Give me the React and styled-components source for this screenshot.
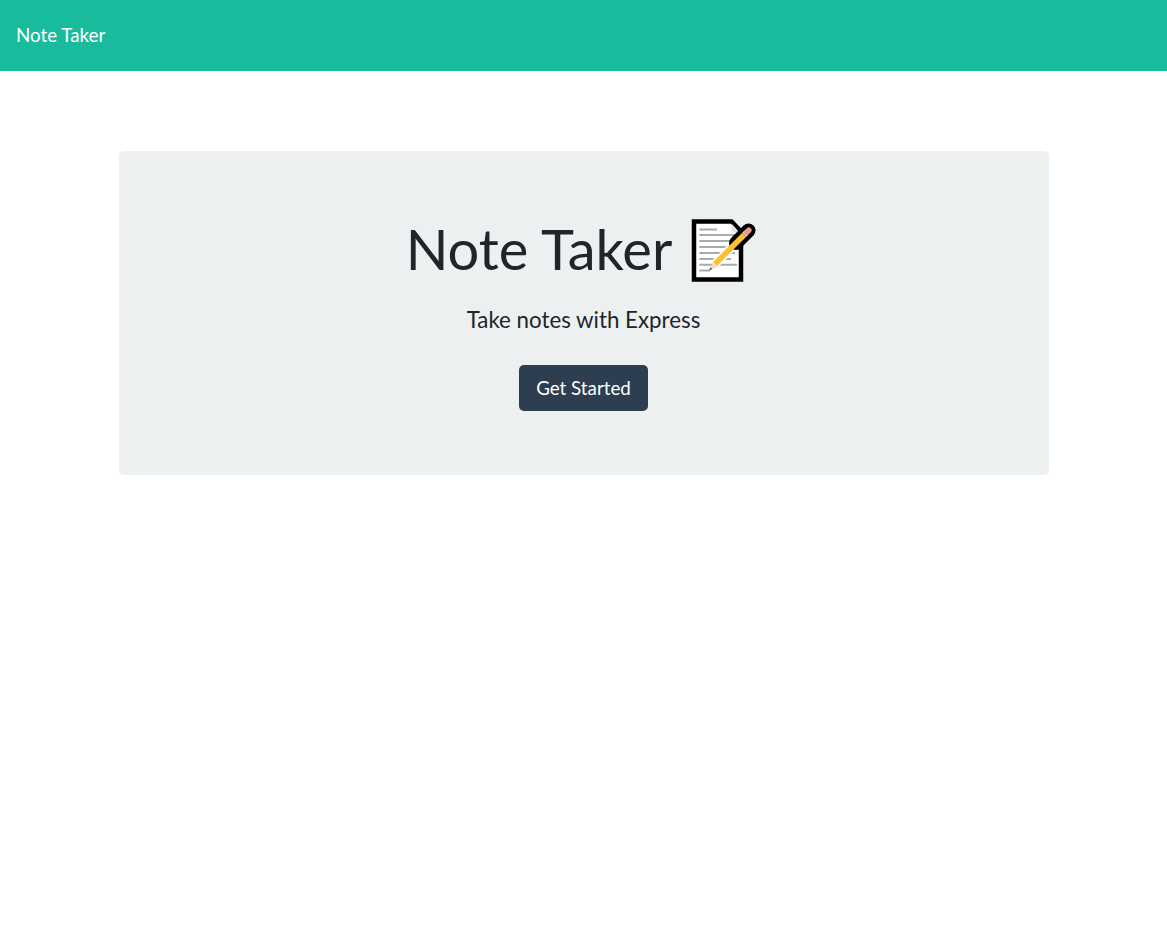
import React from 'react';
import styled, { createGlobalStyle } from 'styled-components';

const GlobalStyle = createGlobalStyle`
  body {
    margin: 0;
    background: #fff;
    font-family: Lato, "Liberation Sans", sans-serif;
    color: #212529;
  }
`;

const NavBar = styled.nav`
  display: flex;
  align-items: center;
  height: 71px;
  padding: 0 16px;
  box-sizing: border-box;
  background-color: #18bc9c;
`;

const Brand = styled.a`
  color: #fff;
  font-size: 18.75px;
  line-height: 1.5;
  text-decoration: none;
`;

const Container = styled.main`
  width: 930px;
  margin: 80px auto 0;
`;

const Jumbotron = styled.section`
  display: flex;
  flex-direction: column;
  align-items: center;
  height: 324px;
  padding: 63px 32px 0;
  box-sizing: border-box;
  border-radius: 5px;
  background-color: #ecf0f1;
`;

const Title = styled.h1`
  display: flex;
  align-items: center;
  gap: 18px;
  margin: 0 0 19px;
  font-size: 56px;
  font-weight: 400;
  line-height: 70px;
`;

const Lead = styled.p`
  margin: 0 0 20px;
  font-size: 22.3px;
  line-height: 34px;
  color: #212529;
`;

const Button = styled.a`
  margin-top: 8px;
  padding: 8px 17px;
  border-radius: 5px;
  background-color: #2c3e50;
  color: #fff;
  font-size: 18.75px;
  line-height: 30px;
  text-decoration: none;
`;

const MemoIcon = () => (
  <svg width="71" height="66" viewBox="0 -2 71 66" aria-hidden="true">
    <path d="M4 3.500h37.500L51 13.500V61.500H4z" fill="#fff" stroke="#000" strokeWidth="4.500" strokeLinejoin="miter" />
    <path d="M41.500 5.500v9h8z" fill="#e4e4e4" />
    <g stroke="#aaa" strokeWidth="2">
      <path d="M9.300 11.500H27" />
      <path d="M9.300 17H45" />
      <path d="M9.300 23H45" />
      <path d="M9.300 29H45" />
      <path d="M9.300 35H45" />
      <path d="M9.300 41H41" />
      <path d="M9.300 46.700H47" />
      <path d="M9.300 52.500H20" />
    </g>
    <path d="M24 47 56 15" stroke="#fff" strokeWidth="9" />
    <path d="M46 25 58.500 12.500" stroke="#000" strokeWidth="14" strokeLinecap="round" />
    <path d="M25 46 54 17" stroke="#fcc02e" strokeWidth="5.600" />
    <path d="M54 17 56.500 14.500" stroke="#e6e6e6" strokeWidth="5.600" />
    <path d="M56.200 14.800 58.800 12.200" stroke="#ef9a8a" strokeWidth="5.600" strokeLinecap="round" />
    <path d="M19 52.500 23 44 28 48.500z" fill="#f5dcc0" />
    <path d="M19 52.500 20.500 49.300 22.400 51z" fill="#555" />
  </svg>
);

export default function App() {
  return (
    <>
      <GlobalStyle />
      <NavBar>
        <Brand href="#">Note Taker</Brand>
      </NavBar>
      <Container>
        <Jumbotron>
          <Title>
            Note Taker
            <MemoIcon />
          </Title>
          <Lead>Take notes with Express</Lead>
          <Button href="#">Get Started</Button>
        </Jumbotron>
      </Container>
    </>
  );
}
